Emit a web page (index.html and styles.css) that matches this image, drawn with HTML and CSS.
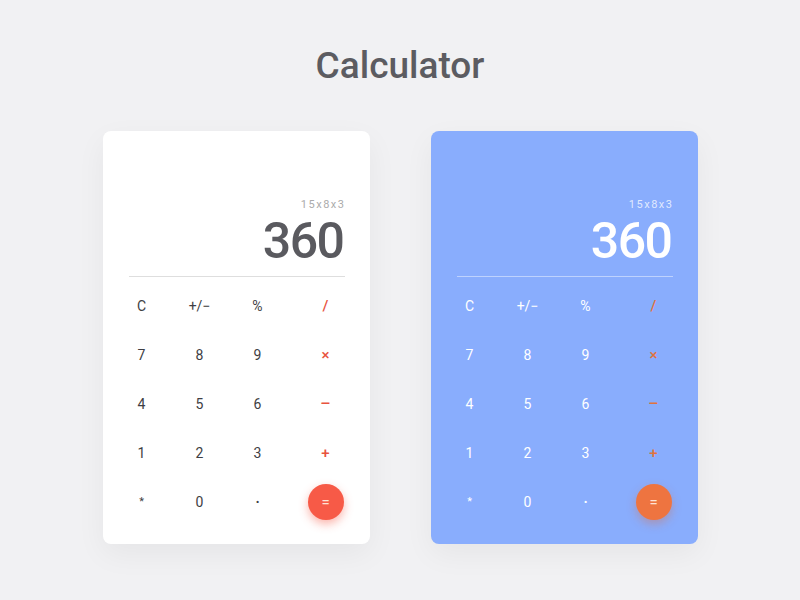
FILE: index.html
```html
<!DOCTYPE html>
<html lang="en">
<head>
<meta charset="utf-8">
<title>Calculator</title>
<link rel="stylesheet" href="styles.css">
</head>
<body>
  <h1 class="title">Calculator</h1>
  <main class="cards">
    <section class="calc calc-light">
      <div class="display">
        <div class="expr">15x8x3</div>
        <div class="result">360</div>
      </div>
      <div class="keys">
        <button class="key">C</button>
        <button class="key">+/−</button>
        <button class="key">%</button>
        <button class="key op">/</button>
        <button class="key">7</button>
        <button class="key">8</button>
        <button class="key">9</button>
        <button class="key op">×</button>
        <button class="key">4</button>
        <button class="key">5</button>
        <button class="key">6</button>
        <button class="key op minus">–</button>
        <button class="key">1</button>
        <button class="key">2</button>
        <button class="key">3</button>
        <button class="key op">+</button>
        <button class="key small">*</button>
        <button class="key">0</button>
        <button class="key dot">·</button>
        <button class="key"><span class="equals">=</span></button>
      </div>
    </section>
    <section class="calc calc-blue">
      <div class="display">
        <div class="expr">15x8x3</div>
        <div class="result">360</div>
      </div>
      <div class="keys">
        <button class="key">C</button>
        <button class="key">+/−</button>
        <button class="key">%</button>
        <button class="key op">/</button>
        <button class="key">7</button>
        <button class="key">8</button>
        <button class="key">9</button>
        <button class="key op">×</button>
        <button class="key">4</button>
        <button class="key">5</button>
        <button class="key">6</button>
        <button class="key op minus">–</button>
        <button class="key">1</button>
        <button class="key">2</button>
        <button class="key">3</button>
        <button class="key op">+</button>
        <button class="key small">*</button>
        <button class="key">0</button>
        <button class="key dot">·</button>
        <button class="key"><span class="equals">=</span></button>
      </div>
    </section>
  </main>
</body>
</html>
```
FILE: styles.css
```css
* { box-sizing: border-box; }

body {
  margin: 0;
  width: 800px;
  height: 600px;
  background: #f1f1f3;
  font-family: Roboto, "Liberation Sans", sans-serif;
  overflow: hidden;
}

.title {
  margin: 0;
  padding-top: 44px;
  height: 131px;
  text-align: center;
  font-size: 37px;
  font-weight: 500;
  line-height: 44px;
  color: #5c5c61;
  letter-spacing: 0;
}

.cards {
  display: flex;
  justify-content: center;
  gap: 61px;
}

.calc {
  width: 267px;
  height: 413px;
  border-radius: 8px;
  box-shadow: 0 10px 30px rgba(0, 0, 0, 0.05);
}

.display {
  height: 146px;
  margin: 0 25px 0 26px;
  display: flex;
  flex-direction: column;
  justify-content: flex-end;
  align-items: flex-end;
  padding-bottom: 6px;
  border-bottom: 1px solid #dedede;
}

.expr {
  font-size: 11px;
  letter-spacing: 1.5px;
  line-height: 14px;
  color: #ababab;
  margin-right: -1px;
}

.result {
  font-size: 50px;
  font-weight: 500;
  line-height: 58px;
  color: #5a5a5f;
  letter-spacing: -1.5px;
  margin-right: 1px;
}

.keys {
  display: grid;
  grid-template-columns: 58px 58px 58px 78px;
  grid-auto-rows: 49px;
  padding: 4px 5px 0 10px;
}

.key {
  border: 0;
  background: none;
  padding: 0;
  font: inherit;
  font-size: 14px;
  font-weight: 400;
  color: #3e3e43;
  display: flex;
  align-items: center;
  justify-content: center;
}

.key.small { font-size: 11px; }

.key.dot { font-size: 14px; font-weight: 700; }

.key.op { font-size: 15px; font-weight: 500; }

.key.minus { font-size: 16px; }

.equals {
  width: 36px;
  height: 36px;
  border-radius: 50%;
  display: flex;
  align-items: center;
  justify-content: center;
  font-size: 15px;
  color: #ffe3d6;
}

/* light theme */
.calc-light { background: #ffffff; }
.calc-light .op { color: #e8533e; }
.calc-light .equals {
  background: #f75a47;
  box-shadow: 0 4px 10px rgba(247, 90, 71, 0.45);
}

/* blue theme */
.calc-blue { background: #89adfd; }
.calc-blue .display { border-bottom-color: rgba(255, 255, 255, 0.45); }
.calc-blue .expr { color: rgba(255, 255, 255, 0.75); }
.calc-blue .result { color: #ffffff; }
.calc-blue .key { color: #ffffff; }
.calc-blue .op { color: #e0733d; }
.calc-blue .equals {
  background: #ee7440;
  box-shadow: 0 4px 10px rgba(220, 110, 70, 0.4);
}
```
